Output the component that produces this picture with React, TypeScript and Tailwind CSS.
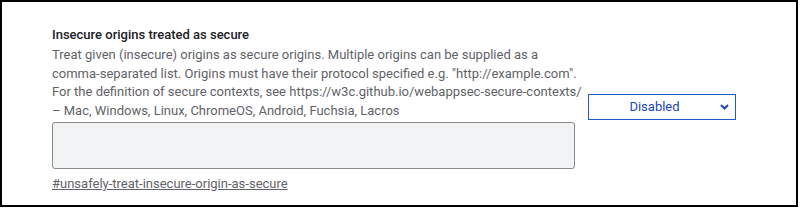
export default function App() {
    return (
        <div className="w-[800px] h-[209px] bg-white" style={{ fontFamily: 'Roboto, "Liberation Sans", sans-serif' }}>
            <div className="w-[798px] h-[207px] border-2 border-black pl-[50px] pt-[21px]">
                <div className="flex items-center">
                    {/* Left: name, description, textarea, link */}
                    <div className="w-[523px] shrink-0">
                        <h3 className="text-[13px] leading-[20px] pt-[2px] font-medium text-[#202124]">
                            Insecure origins treated as secure
                        </h3>
                        <p className="pt-[1px] text-[13px] leading-[18.5px] text-[#5f6368] whitespace-nowrap">
                            Treat given (insecure) origins as secure origins. Multiple origins can be supplied as a<br />
                            comma-separated list. Origins must have their protocol specified e.g. "http://example.com".<br />
                            For the definition of secure contexts, see https://w3c.github.io/webappsec-secure-contexts/<br />
                            – Mac, Windows, Linux, ChromeOS, Android, Fuchsia, Lacros
                        </p>
                        <div className="mt-[2px] h-[47px] w-[523px] rounded-[3px] border border-[#8a8a8a] bg-[#f1f3f4]"></div>
                        <a href="#" className="mt-[5px] block text-[13px] leading-[20px] text-[#5f6368] underline">
                            #unsafely-treat-insecure-origin-as-secure
                        </a>
                    </div>

                    {/* Right: select */}
                    <div className="ml-[13px] mt-[-3px] flex h-[26px] w-[148px] items-center border border-[#1a5dc8] pr-[6px]">
                        <span className="flex-1 text-center text-[13px] text-[#1a47b0]">Disabled</span>
                        <svg width="9" height="6" viewBox="0 0 9 6" fill="none">
                            <polyline points="1,1 4.5,4.5 8,1" stroke="#1a47b0" strokeWidth="2" />
                        </svg>
                    </div>
                </div>
            </div>
        </div>
    )
}
